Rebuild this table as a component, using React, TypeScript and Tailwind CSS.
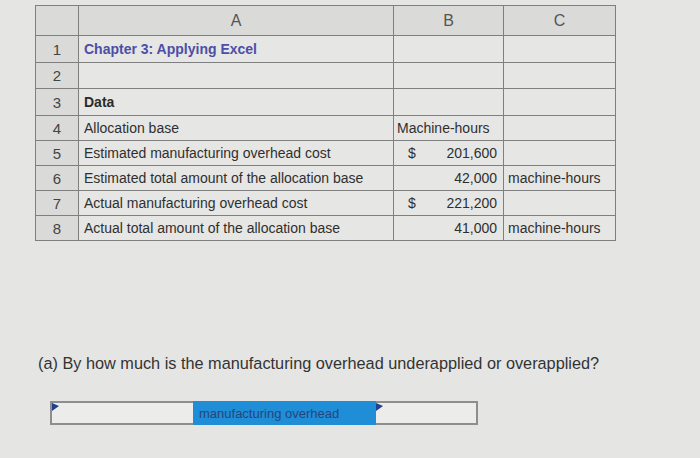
import React from "react"

type Row = {
    n: number
    a: React.ReactNode
    b?: React.ReactNode
    c?: string
    h: string
}

const rows: Row[] = [
    { n: 1, a: <span className="font-bold text-[#4b4fa6]">Chapter 3: Applying Excel</span>, h: "h-[27px]" },
    { n: 2, a: "", h: "h-[26px]" },
    { n: 3, a: <span className="font-bold text-[#2b2b2b]">Data</span>, h: "h-[27px]" },
    { n: 4, a: "Allocation base", b: <span className="pl-[3px]">Machine-hours</span>, h: "h-[25px]" },
    { n: 5, a: "Estimated manufacturing overhead cost", b: <Money value="201,600" />, h: "h-[25px]" },
    { n: 6, a: "Estimated total amount of the allocation base", b: <Num value="42,000" />, c: "machine-hours", h: "h-[25px]" },
    { n: 7, a: "Actual manufacturing overhead cost", b: <Money value="221,200" />, h: "h-[25px]" },
    { n: 8, a: "Actual total amount of the allocation base", b: <Num value="41,000" />, c: "machine-hours", h: "h-[25px]" },
]

function Money({ value }: { value: string }) {
    return (
        <div className="flex justify-between pl-[14px] pr-[6px]">
            <span>$</span>
            <span>{value}</span>
        </div>
    )
}

function Num({ value }: { value: string }) {
    return <div className="text-right pr-[6px]">{value}</div>
}

function Marker() {
    return (
        <svg className="absolute left-0 top-0" width="8" height="9" viewBox="0 0 8 9">
            <polygon points="0,0 7,3 0,8" fill="#1f3f8f" />
        </svg>
    )
}

export default function App() {
    return (
        <main className="w-[700px] h-[458px] overflow-hidden bg-[#e5e5e3] text-[#2f2f2f] font-['Liberation_Sans',Arial,sans-serif]">
            {/* SPREADSHEET */}
            <section className="pt-[5px] pl-[35px]">
                <table className="border-collapse table-fixed text-[14px] leading-none">
                    <colgroup>
                        <col className="w-[43px]" />
                        <col className="w-[315px]" />
                        <col className="w-[110px]" />
                        <col className="w-[112px]" />
                    </colgroup>
                    <thead>
                        <tr className="h-[30px]">
                            <th className="border border-[#7f7f7f] bg-[#dadad8]"></th>
                            <th className="border border-[#7f7f7f] bg-[#dadad8] font-normal text-[16px] text-[#555]">A</th>
                            <th className="border border-[#7f7f7f] bg-[#dadad8] font-normal text-[16px] text-[#555]">B</th>
                            <th className="border border-[#7f7f7f] bg-[#dadad8] font-normal text-[16px] text-[#555]">C</th>
                        </tr>
                    </thead>
                    <tbody>
                        {rows.map((r) => (
                            <tr key={r.n} className={r.h}>
                                <td className="border border-[#7f7f7f] bg-[#dadad8] text-center text-[15px] text-[#444]">{r.n}</td>
                                <td className="border border-[#7f7f7f] bg-[#e6e6e4] pl-[5px] whitespace-nowrap">{r.a}</td>
                                <td className="border border-[#7f7f7f] bg-[#e6e6e4] whitespace-nowrap">{r.b}</td>
                                <td className="border border-[#7f7f7f] bg-[#e6e6e4] pl-[4px] whitespace-nowrap">{r.c}</td>
                            </tr>
                        ))}
                    </tbody>
                </table>
            </section>

            {/* QUESTION */}
            <p className="mt-[110px] ml-[38px] text-[16.3px] text-[#333] whitespace-nowrap">
                (a) By how much is the manufacturing overhead underapplied or overapplied?
            </p>

            {/* ANSWER ROW */}
            <div className="mt-[26px] ml-[50px] flex h-[24px] w-[428px]">
                <div className="relative w-[143px] border-2 border-[#8e8e8e] border-r-0 bg-[#ececea]">
                    <Marker />
                </div>
                <div className="w-[183px] bg-[#1f8ed6] flex items-center pl-[6px] text-[13px] text-[#24467f]">
                    manufacturing overhead
                </div>
                <div className="relative flex-1 border-2 border-[#8e8e8e] border-l-0 bg-[#ececea]">
                    <Marker />
                </div>
            </div>
        </main>
    )
}
